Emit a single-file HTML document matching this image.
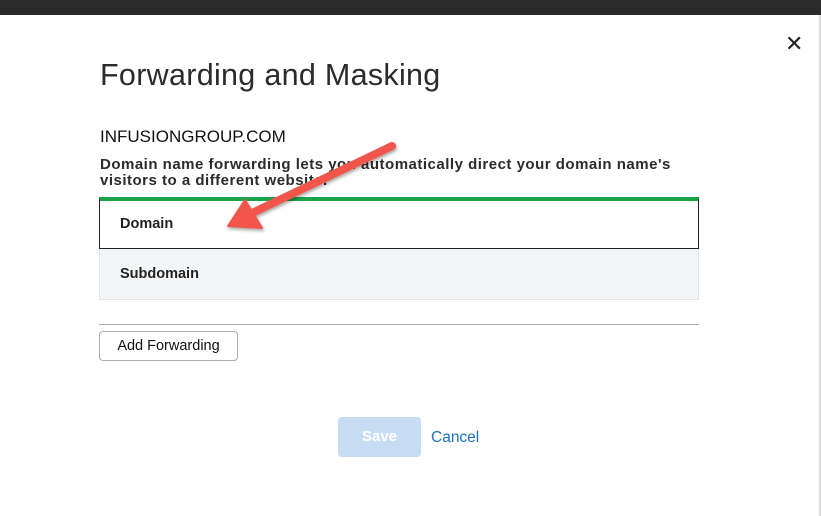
<!DOCTYPE html>
<html><head><meta charset="utf-8"><style>
*{margin:0;padding:0;box-sizing:border-box}
body{width:821px;height:516px;background:#fff;position:relative;overflow:hidden;font-family:"Liberation Sans",sans-serif;color:#222}
.top{position:absolute;left:0;top:0;width:821px;height:15px;background:#2a2a2a}
.edge{position:absolute;right:0;top:15px;width:2px;height:501px;background:#ddd}
.x{position:absolute;left:785px;top:33px;font-size:22px;color:#222;line-height:1}
h1{position:absolute;left:100px;top:58px;font-size:30.5px;font-weight:normal;color:#2b2b2b;letter-spacing:.3px;white-space:nowrap}
.dom{position:absolute;left:100px;top:127px;font-size:17px;color:#111;white-space:nowrap;font-weight:500}
.desc{position:absolute;left:100px;top:157px;font-size:15px;font-weight:bold;line-height:16px;color:#2b2b2b;white-space:nowrap;letter-spacing:.5px}
.row1{position:absolute;left:99px;top:197px;width:600px;height:52px;border:1px solid #222;border-top:4px solid #1ba34a;background:#fff}
.row2{position:absolute;left:99px;top:249px;width:600px;height:51px;background:#f4f5f6;border:1px solid #e5e5e5;border-top:none}
.lbl{position:absolute;left:20px;font-size:14.5px;font-weight:bold;color:#222}
.hr{position:absolute;left:99px;top:324px;width:600px;height:1px;background:#aaa}
.add{position:absolute;left:99px;top:331px;width:139px;height:30px;border:1px solid #a9b0b8;border-radius:4px;font-size:14.5px;color:#111;text-align:center;line-height:28px}
.save{position:absolute;left:338px;top:417px;width:83px;height:40px;background:#c7ddf3;border-radius:4px;color:#fff;font-weight:bold;font-size:15px;text-align:center;line-height:40px}
.cancel{position:absolute;left:431px;top:429px;font-size:15.5px;color:#1e6fc5}
</style></head><body>
<div class="top"></div><div class="edge"></div>
<div class="x">✕</div>
<h1>Forwarding and Masking</h1>
<div class="dom">INFUSIONGROUP.COM</div>
<div class="desc">Domain name forwarding lets you automatically direct your domain name's<br>visitors to a different website.</div>
<div class="row1"><span class="lbl" style="top:15px">Domain</span></div>
<div class="row2"><span class="lbl" style="top:17px">Subdomain</span></div>
<div class="hr"></div>
<div class="add">Add Forwarding</div>
<div class="save">Save</div>
<div class="cancel">Cancel</div>
<svg width="821" height="516" style="position:absolute;left:0;top:0">
<defs><filter id="s"><feDropShadow dx="1" dy="2" stdDeviation="1.5" flood-opacity=".35"/></filter></defs>
<g filter="url(#s)" fill="#f2564b" stroke="#f2564b">
<line x1="392" y1="146" x2="250" y2="214" stroke-width="8" stroke-linecap="round"/>
<polygon points="245,200 228,226 262,228" stroke-width="2" stroke-linejoin="round"/>
</g>
</svg>
</body></html>
